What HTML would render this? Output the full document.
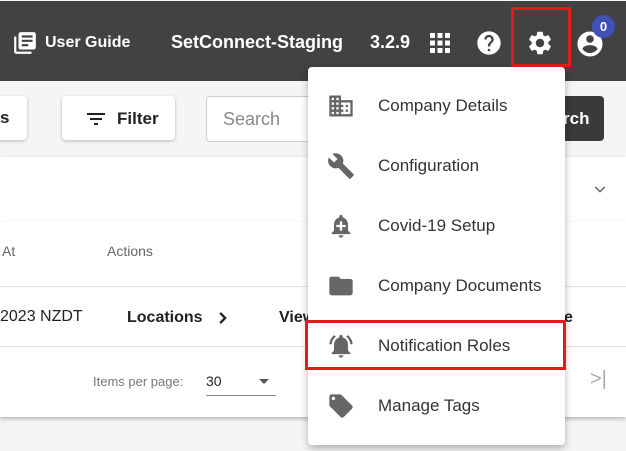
<!DOCTYPE html><html><head><style>
*{box-sizing:border-box;margin:0;padding:0}
body{width:626px;height:451px;overflow:hidden;background:#f4f5f7;font-family:"Liberation Sans",sans-serif;position:relative}
.a{position:absolute}
.hdr{left:0;top:1px;width:626px;height:80px;background:#424242;color:#fff;font-weight:bold}
.btn{background:#fff;border-radius:4px;box-shadow:0 1px 3px rgba(0,0,0,.25)}
.card{background:#fff;box-shadow:0 1px 3px rgba(0,0,0,.2)}
.menu{left:308px;top:67px;width:257px;height:378px;background:#fff;border-radius:4px;box-shadow:0 3px 8px rgba(0,0,0,.3)}
.it{position:absolute;left:0;width:257px;height:60px;font-size:17px;color:#333}
.it span{position:absolute;left:70px;top:20px}
.it svg{position:absolute;left:19px;top:16px}
</style></head><body>
<div class="a hdr">
 <svg class="a" style="left:12px;top:29px" width="26" height="26" viewBox="0 0 24 24" fill="#fff"><path d="M4 6H2v14c0 1.1.9 2 2 2h14v-2H4V6zm16-4H8c-1.1 0-2 .9-2 2v12c0 1.1.9 2 2 2h12c1.1 0 2-.9 2-2V4c0-1.1-.9-2-2-2zm-1 9H9V9h10v2zm-4 4H9v-2h6v2zm4-8H9V5h10v2z"/></svg>
 <div class="a" style="left:45px;top:33px;font-size:16px">User Guide</div>
 <div class="a" style="left:171px;top:31px;font-size:18px">SetConnect-Staging</div>
 <div class="a" style="left:370px;top:31px;font-size:18px">3.2.9</div>
 <svg class="a" style="left:425px;top:27px" width="30" height="30" viewBox="0 0 24 24" fill="#fff"><path d="M4 8h4V4H4v4zm6 12h4v-4h-4v4zm-6 0h4v-4H4v4zm0-6h4v-4H4v4zm6 0h4v-4h-4v4zm6-10v4h4V4h-4zm-6 4h4V4h-4v4zm6 6h4v-4h-4v4zm0 6h4v-4h-4v4z"/></svg>
 <svg class="a" style="left:475px;top:28px" width="28" height="28" viewBox="0 0 24 24" fill="#fff"><path d="M12 2C6.48 2 2 6.48 2 12s4.48 10 10 10 10-4.48 10-10S17.520 2 12 2zm1 17h-2v-2h2v2zm2.07-7.75l-.9.92C13.45 12.9 13 13.5 13 15h-2v-.5c0-1.1.45-2.1 1.17-2.83l1.24-1.26c.37-.36.59-.86.59-1.41 0-1.1-.9-2-2-2s-2 .9-2 2H8c0-2.21 1.790-4 4-4s4 1.79 4 4c0 .88-.36 1.68-.93 2.25z"/></svg>
 <svg class="a" style="left:526px;top:28px" width="28" height="28" viewBox="0 0 24 24" fill="#fff"><path d="M19.14 12.94c.04-.3.06-.61.06-.94 0-.32-.02-.64-.07-.94l2.03-1.58a.49.49 0 00.12-.61l-1.92-3.32a.488.488 0 00-.59-.22l-2.39.96c-.5-.38-1.03-.7-1.62-.94l-.36-2.54a.484.484 0 00-.48-.41h-3.84c-.24 0-.43.17-.47.41l-.36 2.54c-.59.24-1.13.57-1.62.94l-2.39-.96c-.22-.08-.47 0-.59.22L2.74 8.87c-.12.21-.08.47.12.61l2.03 1.58c-.05.3-.09.63-.09.94s.02.64.07.94l-2.030 1.58a.49.49 0 00-.12.61l1.92 3.32c.12.22.37.29.59.22l2.39-.96c.5.38 1.03.7 1.62.94l.36 2.54c.05.24.24.41.48.41h3.84c.24 0 .44-.17.47-.41l.36-2.54c.59-.24 1.13-.56 1.62-.94l2.39.96c.22.08.47 0 .59-.22l1.92-3.32c.12-.22.07-.47-.12-.61l-2.01-1.58zM12 15.6c-1.98 0-3.6-1.62-3.6-3.6s1.62-3.6 3.6-3.6 3.6 1.62 3.6 3.6-1.62 3.6-3.6 3.6z"/></svg>
 <svg class="a" style="left:575px;top:28px" width="30" height="30" viewBox="0 0 24 24" fill="#fff"><path d="M12 2C6.48 2 2 6.48 2 12s4.48 10 10 10 10-4.48 10-10S17.52 2 12 2zm0 3c1.66 0 3 1.34 3 3s-1.34 3-3 3-3-1.34-3-3 1.34-3 3-3zm0 14.2c-2.5 0-4.71-1.28-6-3.22.03-1.99 4-3.08 6-3.08 1.99 0 5.97 1.09 6 3.08-1.29 1.94-3.5 3.22-6 3.22z"/></svg>
 <div class="a" style="left:592px;top:14px;width:23px;height:23px;border-radius:50%;background:#3f51b5;font-size:13px;text-align:center;line-height:23px">0</div>
</div>
<div class="a" style="left:511px;top:7px;width:60px;height:60px;border:3px solid #e21b1b"></div>
<div class="a btn" style="left:-10px;top:96px;width:37px;height:44px"><span class="a" style="left:10px;top:12px;font-size:17px;font-weight:bold;color:#222">s</span></div>
<div class="a btn" style="left:62px;top:96px;width:113px;height:44px">
 <svg class="a" style="left:22px;top:11px" width="24" height="24" viewBox="0 0 24 24" fill="#222"><path d="M10 18h4v-2h-4v2zM3 6v2h18V6H3zm3 7h12v-2H6v2z"/></svg>
 <span class="a" style="left:55px;top:13px;font-size:17px;font-weight:bold;color:#222">Filter</span></div>
<div class="a" style="left:206px;top:96px;width:140px;height:46px;background:#fff;border:1px solid #ccc;border-radius:4px"><span class="a" style="left:16px;top:12px;font-size:18px;color:#888">Search</span></div>
<div class="a" style="left:530px;top:96px;width:74px;height:45px;background:#3a3a3a;border-radius:4px"><span class="a" style="left:33px;top:13px;font-size:17px;font-weight:bold;color:#fff">rch</span></div>
<div class="a card" style="left:0;top:157px;width:626px;height:66px"><svg class="a" style="left:592px;top:24px" width="16" height="16" viewBox="0 0 24 24" fill="none" stroke="#555" stroke-width="2"><path d="M5 9l7 7 7-7"/></svg></div>
<div class="a card" style="left:0;top:222px;width:626px;height:195px;box-shadow:0 2px 4px rgba(0,0,0,.25)">
 <span class="a" style="left:2px;top:21px;font-size:14px;color:#666">At</span>
 <span class="a" style="left:107px;top:21px;font-size:14px;color:#666">Actions</span>
 <div class="a" style="left:0;top:64px;width:626px;height:1px;background:#e0e0e0"></div>
 <span class="a" style="left:0;top:86px;font-size:16px;color:#222">2023 NZDT</span>
 <span class="a" style="left:127px;top:87px;font-size:16px;font-weight:bold;color:#222">Locations</span>
 <svg class="a" style="left:212px;top:85px" width="22" height="22" viewBox="0 0 24 24" fill="#222"><path d="M8 16.6L12.6 12 8 7.4 9.8 5.6l6.4 6.4-6.4 6.4z"/></svg>
 <span class="a" style="left:279px;top:87px;font-size:16px;font-weight:bold;color:#222">View</span>
 <span class="a" style="left:564px;top:87px;font-size:16px;font-weight:bold;color:#222">e</span>
 <div class="a" style="left:0;top:124px;width:626px;height:1px;background:#e0e0e0"></div>
 <span class="a" style="left:93px;top:152px;font-size:13px;color:#777">Items per page:</span>
 <span class="a" style="left:206px;top:151px;font-size:14px;color:#222">30</span>
 <div class="a" style="left:259px;top:157px;border:5px solid transparent;border-top-color:#555"></div>
 <div class="a" style="left:206px;top:173px;width:70px;height:1px;background:#888"></div>
 <span class="a" style="left:590px;top:146px;font-size:20px;color:#aaa">&gt;|</span>
</div>
<div class="a menu">
 <div class="it" style="top:9px"><svg width="28" height="28" viewBox="0 0 24 24" fill="#666"><path d="M12 7V3H2v18h20V7H12zM6 19H4v-2h2v2zm0-4H4v-2h2v2zm0-4H4V9h2v2zm0-4H4V5h2v2zm4 12H8v-2h2v2zm0-4H8v-2h2v2zm0-4H8V9h2v2zm0-4H8V5h2v2zm10 12h-8v-2h2v-2h-2v-2h2v-2h-2V9h8v10zm-2-8h-2v2h2v-2zm0 4h-2v2h2v-2z"/></svg><span>Company Details</span></div>
 <div class="it" style="top:69px"><svg width="28" height="28" viewBox="0 0 24 24" fill="#666"><path d="M22.7 19l-9.1-9.1c.9-2.3.4-5-1.5-6.9-2-2-5-2.4-7.4-1.3L9 6 6 9 1.6 4.7C.4 7.1.9 10.1 2.9 12.1c1.9 1.9 4.6 2.4 6.9 1.5l9.1 9.1c.4.4 1 .4 1.4 0l2.3-2.3c.5-.4.5-1.1.1-1.4z"/></svg><span>Configuration</span></div>
 <div class="it" style="top:129px"><svg width="28" height="28" viewBox="0 0 24 24" fill="#666"><path d="M12 22c1.1 0 2-.9 2-2h-4c0 1.1.9 2 2 2zm6-6v-5c0-3.070-1.64-5.64-4.5-6.32V4c0-.83-.67-1.5-1.5-1.5s-1.5.67-1.5 1.5v.68C7.63 5.36 6 7.92 6 11v5l-2 2v1h16v-1l-2-2zm-2-3h-3v3h-2v-3H8v-2h3V8h2v3h3v2z"/></svg><span>Covid-19 Setup</span></div>
 <div class="it" style="top:189px"><svg width="28" height="28" viewBox="0 0 24 24" fill="#666"><path d="M10 4H4c-1.1 0-2 .9-2 2v12c0 1.1.9 2 2 2h16c1.1 0 2-.9 2-2V8c0-1.1-.9-2-2-2h-8l-2-2z"/></svg><span>Company Documents</span></div>
 <div class="it" style="top:249px"><svg width="28" height="28" viewBox="0 0 24 24" fill="#666"><path d="M7.58 4.08L6.15 2.65C3.75 4.48 2.17 7.3 2.03 10.5h2c.15-2.65 1.51-4.97 3.55-6.42zm12.39 6.42h2c-.15-3.2-1.73-6.02-4.12-7.85l-1.42 1.43c2.02 1.45 3.39 3.77 3.54 6.42zM18 11c0-3.07-1.64-5.64-4.5-6.32V4c0-.83-.67-1.5-1.5-1.5s-1.5.67-1.5 1.5v.68C7.63 5.36 6 7.92 6 11v5l-2 2v1h16v-1l-2-2v-5zm-6 11c.14 0 .27-.01.4-.04.65-.14 1.18-.58 1.44-1.18.1-.24.15-.5.15-.78h-4c.01 1.1.9 2 2.01 2z"/></svg><span>Notification Roles</span></div>
 <div class="it" style="top:309px"><svg width="28" height="28" viewBox="0 0 24 24" fill="#666"><path d="M21.41 11.58l-9-9C12.05 2.22 11.55 2 11 2H4c-1.1 0-2 .9-2 2v7c0 .55.22 1.05.59 1.42l9 9c.36.36.86.58 1.41.58.55 0 1.05-.22 1.41-.59l7-7c.37-.36.59-.86.59-1.41 0-.55-.23-1.06-.59-1.42zM5.5 7C4.67 7 4 6.33 4 5.5S4.67 4 5.5 4 7 4.67 7 5.5 6.33 7 5.5 7z"/></svg><span>Manage Tags</span></div>
</div>
<div class="a" style="left:305px;top:320px;width:261px;height:50px;border:3px solid #e21b1b"></div>
</body></html>
